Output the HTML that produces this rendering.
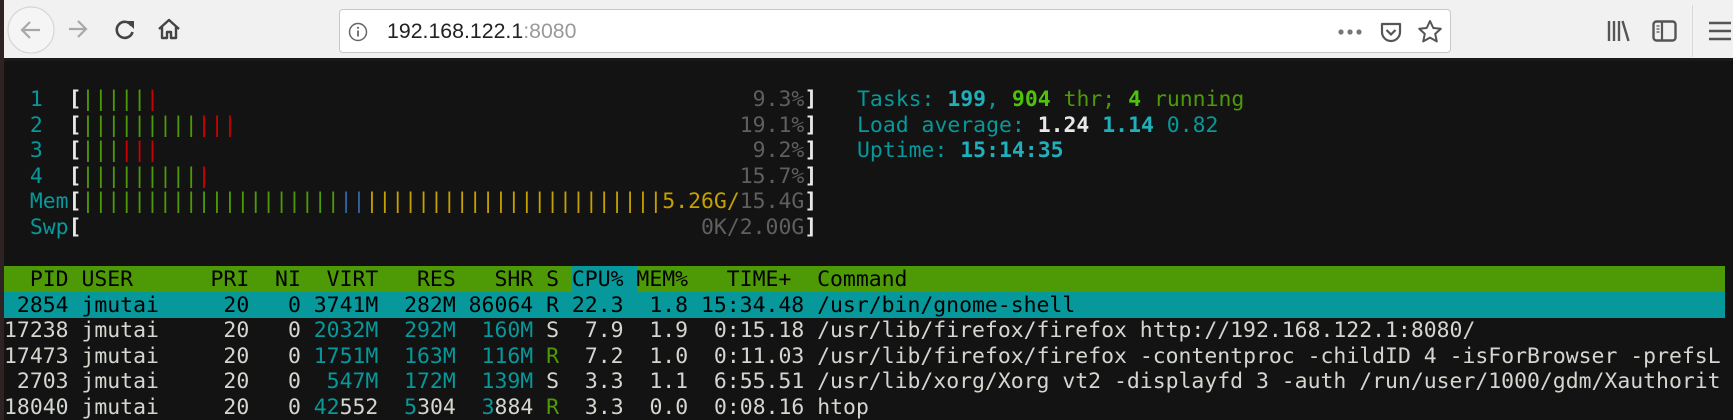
<!DOCTYPE html>
<html><head><meta charset="utf-8">
<style>
*{margin:0;padding:0;box-sizing:border-box}
html,body{width:1733px;height:420px;overflow:hidden;background:#131313}
#tb{position:absolute;left:0;top:0;width:1733px;height:61px;background:#f1f1f1;border-bottom:3px solid #1a1a1a}
#strip{position:absolute;left:0;top:0;width:4px;height:420px;background:#2e2222}
#url{position:absolute;left:339px;top:9px;width:1112px;height:44px;background:#fff;border:1px solid #c8c8c8;border-radius:4px}
#url .t{position:absolute;left:47px;top:9px;font:21.3px "Liberation Sans",sans-serif;color:#222}
#url .t span{color:#9a9a9a}
.ic{position:absolute}
.term{position:absolute;left:4px;font-family:"DejaVu Sans Mono",monospace;font-size:21.45px;line-height:25.5px;height:25.5px;white-space:pre;color:#d3d7cf}
.c{color:#06989a}.cb{color:#1fb0bb;font-weight:bold}.g{color:#4e9a06}.gb{color:#4fc20c;font-weight:bold}
.r{color:#cc0000}.b{color:#3465a4}.y{color:#c4a000}.gr{color:#5f5f5f}.w{color:#e8e8e8;font-weight:bold}
.bar{position:absolute;left:4px;width:1721px;height:26px}
</style></head><body>
<div id="tb">
  <svg class="ic" style="left:6px;top:5px" width="50" height="50" viewBox="0 0 50 50"><circle cx="25" cy="25" r="23" fill="#f5f5f5" stroke="#d6d6d6" stroke-width="1.2"/><path d="M34 25H16M24 17l-8 8 8 8" fill="none" stroke="#a8a8a8" stroke-width="2.2"/></svg>
  <svg class="ic" style="left:66px;top:19px" width="24" height="20" viewBox="0 0 24 20"><path d="M3 10h17M12 2l8 8-8 8" fill="none" stroke="#a8a8a8" stroke-width="2.2"/></svg>
  <svg class="ic" style="left:114px;top:18px" width="22" height="22" viewBox="0 0 22 22"><path d="M17.5 7.5A8 8 0 1 0 18.5 14" fill="none" stroke="#444" stroke-width="2.6"/><path d="M12 3h8v8z" fill="#444"/></svg>
  <svg class="ic" style="left:157px;top:17px" width="24" height="24" viewBox="0 0 24 24"><path d="M2 12L12 3l10 9M5 10v11h5v-6h4v6h5V10" fill="none" stroke="#444" stroke-width="2.4" stroke-linejoin="round"/></svg>
  <div id="url">
    <svg class="ic" style="left:8px;top:12px" width="20" height="20" viewBox="0 0 20 20"><circle cx="10" cy="10" r="8.5" fill="none" stroke="#666" stroke-width="1.5"/><path d="M10 8.5v6" stroke="#666" stroke-width="1.8"/><circle cx="10" cy="5.8" r="1.1" fill="#666"/></svg>
    <div class="t">192.168.122.1<span>:8080</span></div>
    <svg class="ic" style="left:997px;top:18px" width="26" height="8" viewBox="0 0 26 8"><circle cx="4" cy="4" r="2.6" fill="#777"/><circle cx="13" cy="4" r="2.6" fill="#777"/><circle cx="22" cy="4" r="2.6" fill="#777"/></svg>
    <svg class="ic" style="left:1039px;top:10px" width="24" height="24" viewBox="0 0 24 24"><path d="M3 4h18v8a9 9 0 0 1-18 0z" fill="none" stroke="#555" stroke-width="2.2" stroke-linejoin="round"/><path d="M7.5 10l4.5 4.5 4.5-4.5" fill="none" stroke="#555" stroke-width="2.2"/></svg>
    <svg class="ic" style="left:1077px;top:9px" width="26" height="26" viewBox="0 0 26 26"><path d="M13 2l3.3 7 7.5.8-5.6 5.1 1.6 7.5L13 18.6l-6.8 3.8 1.6-7.5-5.6-5.1 7.5-.8z" fill="none" stroke="#555" stroke-width="2" stroke-linejoin="round"/></svg>
  </div>
  <svg class="ic" style="left:1607px;top:20px" width="24" height="22" viewBox="0 0 24 22"><path d="M2 1v20M7 1v20M12 1v20M15.5 1l6 20" stroke="#555" stroke-width="2.4"/></svg>
  <svg class="ic" style="left:1652px;top:20px" width="25" height="22" viewBox="0 0 25 22"><rect x="1.5" y="1.5" width="22" height="19" rx="3" fill="none" stroke="#555" stroke-width="2.4"/><path d="M10 2v18" stroke="#555" stroke-width="2.2"/><path d="M4.5 6h3M4.5 9h3M4.5 12h3" stroke="#555" stroke-width="1.3"/></svg>
  <div style="position:absolute;left:1692px;top:5px;width:1px;height:52px;background:#d8d8d8"></div>
  <svg class="ic" style="left:1709px;top:21px" width="22" height="20" viewBox="0 0 22 20"><path d="M0 2h22M0 10h22M0 18h22" stroke="#555" stroke-width="2.6"/></svg>
</div>
<div id="strip"></div>

<div class="term" style="top:87px">  <span class="c">1</span>  <span class="w">[</span><span class="g">|||||</span><span class="r">|</span>                                              <span class="gr">9.3%</span><span class="w">]</span></div>
<div class="term" style="top:112.5px">  <span class="c">2</span>  <span class="w">[</span><span class="g">|||||||||</span><span class="r">|||</span>                                       <span class="gr">19.1%</span><span class="w">]</span></div>
<div class="term" style="top:138px">  <span class="c">3</span>  <span class="w">[</span><span class="g">|||</span><span class="r">|||</span>                                              <span class="gr">9.2%</span><span class="w">]</span></div>
<div class="term" style="top:163.5px">  <span class="c">4</span>  <span class="w">[</span><span class="g">|||||||||</span><span class="r">|</span>                                         <span class="gr">15.7%</span><span class="w">]</span></div>
<div class="term" style="top:189px">  <span class="c">Mem</span><span class="w">[</span><span class="g">||||||||||||||||||||</span><span class="b">||</span><span class="y">|||||||||||||||||||||||5.26G/</span><span class="gr">15.4G</span><span class="w">]</span></div>
<div class="term" style="top:214.5px">  <span class="c">Swp</span><span class="w">[</span>                                                <span class="gr">0K/2.00G</span><span class="w">]</span></div>

<div class="term" style="top:87px;left:857px"><span class="c">Tasks: </span><span class="cb">199</span><span class="c">, </span><span class="gb">904</span><span class="g"> thr; </span><span class="gb">4</span><span class="g"> running</span></div>
<div class="term" style="top:112.5px;left:857px"><span class="c">Load average: </span><span class="w">1.24 </span><span class="cb">1.14 </span><span class="c">0.82</span></div>
<div class="term" style="top:138px;left:857px"><span class="c">Uptime: </span><span class="cb">15:14:35</span></div>

<div class="bar" style="top:266px;background:#4e9a06"></div>
<div class="bar" style="top:266px;left:572px;width:65px;background:#06989a"></div>
<div class="bar" style="top:292px;background:#06989a"></div>
<div class="term" style="top:267px;color:#000">  PID USER      PRI  NI  VIRT   RES   SHR S CPU% MEM%   TIME+  Command</div>
<div class="term" style="top:292.5px;color:#000"> 2854 jmutai     20   0 3741M  282M 86064 R 22.3  1.8 15:34.48 /usr/bin/gnome-shell</div>
<div class="term" style="top:318px">17238 jmutai     20   0 <span class="c">2032M  292M  160M</span> S  7.9  1.9  0:15.18 /usr/lib/firefox/firefox http://192.168.122.1:8080/</div>
<div class="term" style="top:343.5px">17473 jmutai     20   0 <span class="c">1751M  163M  116M</span> <span class="g">R</span>  7.2  1.0  0:11.03 /usr/lib/firefox/firefox -contentproc -childID 4 -isForBrowser -prefsL</div>
<div class="term" style="top:369px"> 2703 jmutai     20   0  <span class="c">547M  172M  139M</span> S  3.3  1.1  6:55.51 /usr/lib/xorg/Xorg vt2 -displayfd 3 -auth /run/user/1000/gdm/Xauthorit</div>
<div class="term" style="top:394.5px">18040 jmutai     20   0 <span class="c">42</span>552  <span class="c">5</span>304  <span class="c">3</span>884 <span class="g">R</span>  3.3  0.0  0:08.16 htop</div>
</body></html>
